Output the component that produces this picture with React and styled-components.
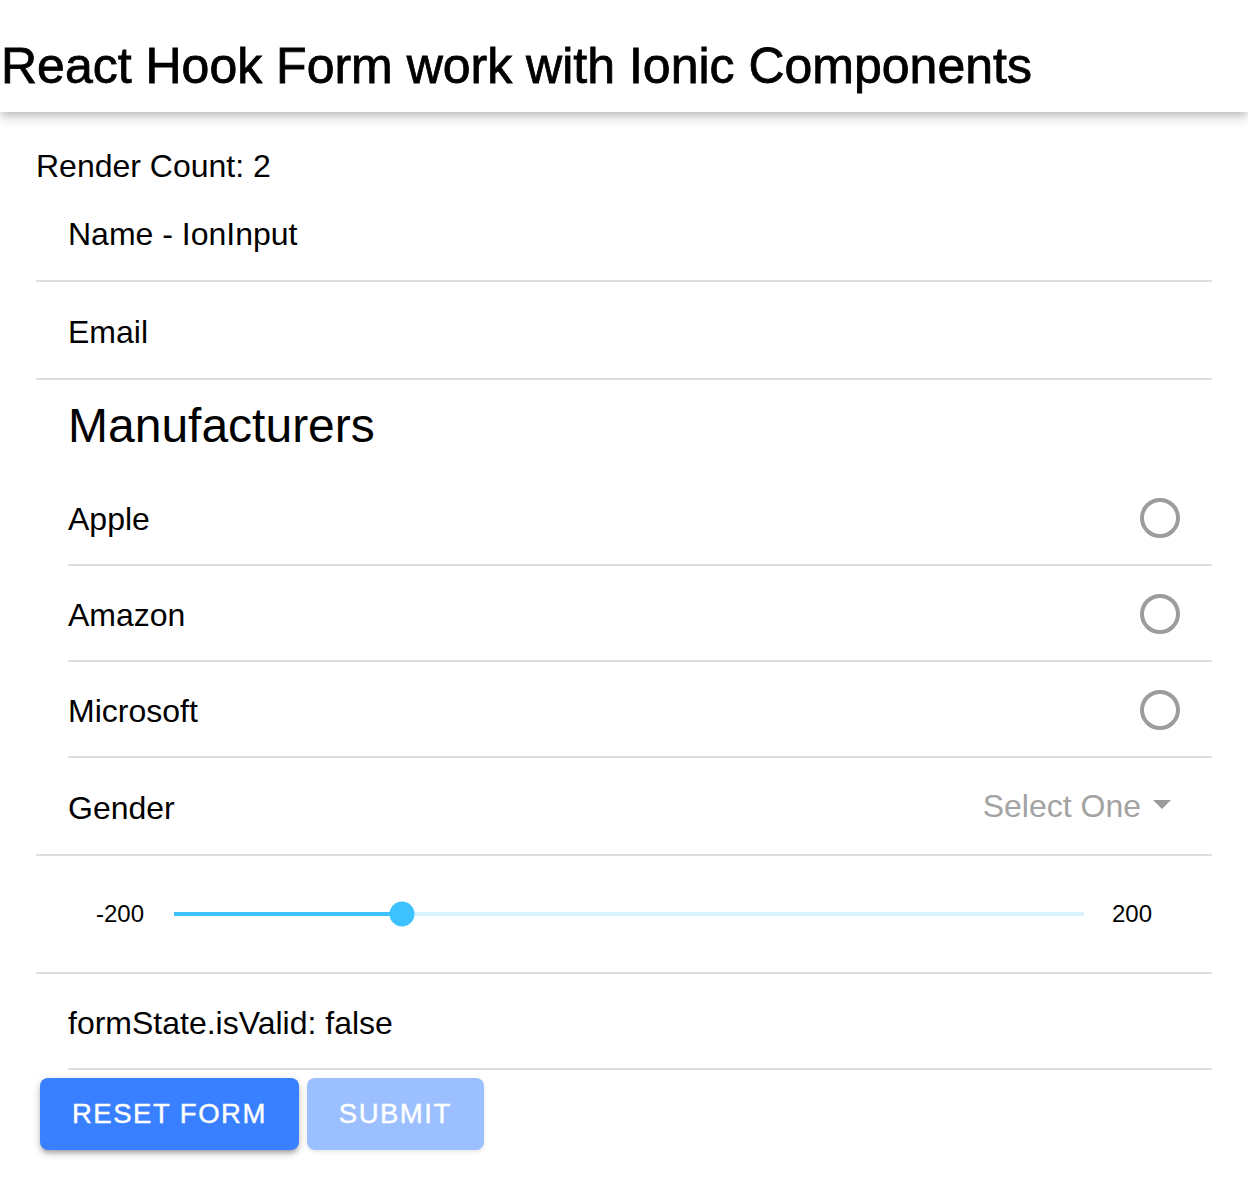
import styled, { createGlobalStyle } from "styled-components";

const GlobalStyle = createGlobalStyle`
  html, body {
    margin: 0;
    padding: 0;
    background: #ffffff;
  }

  body {
    font-family: "Liberation Sans", Arial, sans-serif;
    color: #000000;
  }
`;

const Header = styled.header`
  height: 112px;
  box-sizing: border-box;
  padding-top: 20px;
  display: flex;
  align-items: center;
  background: #ffffff;
  box-shadow: 0 4px 8px -2px rgba(0, 0, 0, 0.2), 0 8px 10px 0 rgba(0, 0, 0, 0.1);
  position: relative;
  z-index: 1;
`;

const Title = styled.h1`
  margin: 0;
  padding-left: 1px;
  font-size: 50px;
  font-weight: 400;
  -webkit-text-stroke: 0.8px #000000;
`;

const Content = styled.main`
  padding: 0 36px 24px;
`;

const RenderCount = styled.div`
  padding-top: 36px;
  font-size: 32px;
  line-height: 36px;
`;

const Item = styled.div`
  display: flex;
  padding-left: 32px;
  border-bottom: ${({ $lines }) => ($lines === "full" ? "2px solid #dedede" : "none")};
`;

const ItemInner = styled.div`
  flex: 1;
  display: flex;
  align-items: center;
  justify-content: space-between;
  min-height: ${({ $height }) => $height || 96}px;
  padding-right: ${({ $padRight }) => ($padRight === undefined ? 32 : $padRight)}px;
  border-bottom: ${({ $lines }) => ($lines === "inset" ? "2px solid #dedede" : "none")};
`;

const Label = styled.span`
  padding-top: 4px;
  font-size: 32px;
`;

const ListHeader = styled.div`
  padding: 22px 32px 20px;
  font-size: 48px;
  line-height: 48px;
`;

const Radio = styled.span`
  width: 40px;
  height: 40px;
  box-sizing: border-box;
  margin-top: 2px;
  border: 4px solid #9c9c9c;
  border-radius: 50%;
`;

const Select = styled.div`
  display: flex;
  align-items: center;
  gap: 12px;
  padding-right: 9px;
  font-size: 32px;
  color: #a3a3a3;
`;

const Caret = styled.span`
  width: 0;
  height: 0;
  margin-top: -4px;
  border-left: 9px solid transparent;
  border-right: 9px solid transparent;
  border-top: 9px solid #9a9a9a;
`;

const RangeRow = styled.div`
  flex: 1;
  display: flex;
  align-items: center;
  padding: 0 60px 0 28px;
  font-size: 24px;
`;

const RangeLabel = styled.span`
  flex: none;
`;

const Track = styled.div`
  flex: 1;
  position: relative;
  height: 4px;
  margin: 0 28px 0 30px;
  background: #d8f3ff;
`;

const Fill = styled.div`
  height: 100%;
  background: #3dc2ff;
`;

const Knob = styled.span`
  position: absolute;
  top: 50%;
  width: 25px;
  height: 25px;
  border-radius: 50%;
  background: #3dc2ff;
  transform: translate(-50%, -50%);
`;

const Buttons = styled.div`
  display: flex;
  gap: 8px;
  padding: 8px 4px 0;
`;

const Button = styled.button`
  height: 72px;
  padding: 0 32px;
  border: none;
  border-radius: 8px;
  font-family: "Liberation Sans", Arial, sans-serif;
  font-size: 27.5px;
  font-weight: 400;
  letter-spacing: 1.5px;
  -webkit-text-stroke: 0.4px #ffffff;
  color: #ffffff;
  background: ${({ $disabled }) => ($disabled ? "#9cc0ff" : "#3880ff")};
  box-shadow: ${({ $disabled }) =>
    $disabled
      ? "0 2px 4px rgba(0, 0, 0, 0.1)"
      : "0 4px 4px -2px rgba(0, 0, 0, 0.2), 0 4px 6px 0 rgba(0, 0, 0, 0.14), 0 2px 10px 0 rgba(0, 0, 0, 0.12)"};
`;

const manufacturers = ["Apple", "Amazon", "Microsoft"];

function RangeItem({ min, max, value }) {
  const pct = ((value - min) / (max - min)) * 100;

  return (
    <Item $lines="full">
      <ItemInner $height={116} $padRight={0}>
        <RangeRow>
          <RangeLabel>{min}</RangeLabel>
          <Track>
            <Fill style={{ width: `${pct}%` }} />
            <Knob style={{ left: `${pct}%` }} />
          </Track>
          <RangeLabel>{max}</RangeLabel>
        </RangeRow>
      </ItemInner>
    </Item>
  );
}

export default function App() {
  return (
    <>
      <GlobalStyle />
      <Header>
        <Title>React Hook Form work with Ionic Components</Title>
      </Header>

      <Content>
        <RenderCount>Render Count: 2</RenderCount>

        <Item $lines="full">
          <ItemInner>
            <Label>Name - IonInput</Label>
          </ItemInner>
        </Item>
        <Item $lines="full">
          <ItemInner>
            <Label>Email</Label>
          </ItemInner>
        </Item>

        <ListHeader>Manufacturers</ListHeader>
        {manufacturers.map((name) => (
          <Item key={name}>
            <ItemInner $lines="inset" $height={94}>
              <Label>{name}</Label>
              <Radio />
            </ItemInner>
          </Item>
        ))}

        <Item $lines="full">
          <ItemInner>
            <Label>Gender</Label>
            <Select>
              Select One
              <Caret />
            </Select>
          </ItemInner>
        </Item>

        <RangeItem min={-200} max={200} value={-100} />

        <Item>
          <ItemInner $lines="inset" $height={94}>
            <Label>formState.isValid: false</Label>
          </ItemInner>
        </Item>

        <Buttons>
          <Button>RESET FORM</Button>
          <Button $disabled>SUBMIT</Button>
        </Buttons>
      </Content>
    </>
  );
}
